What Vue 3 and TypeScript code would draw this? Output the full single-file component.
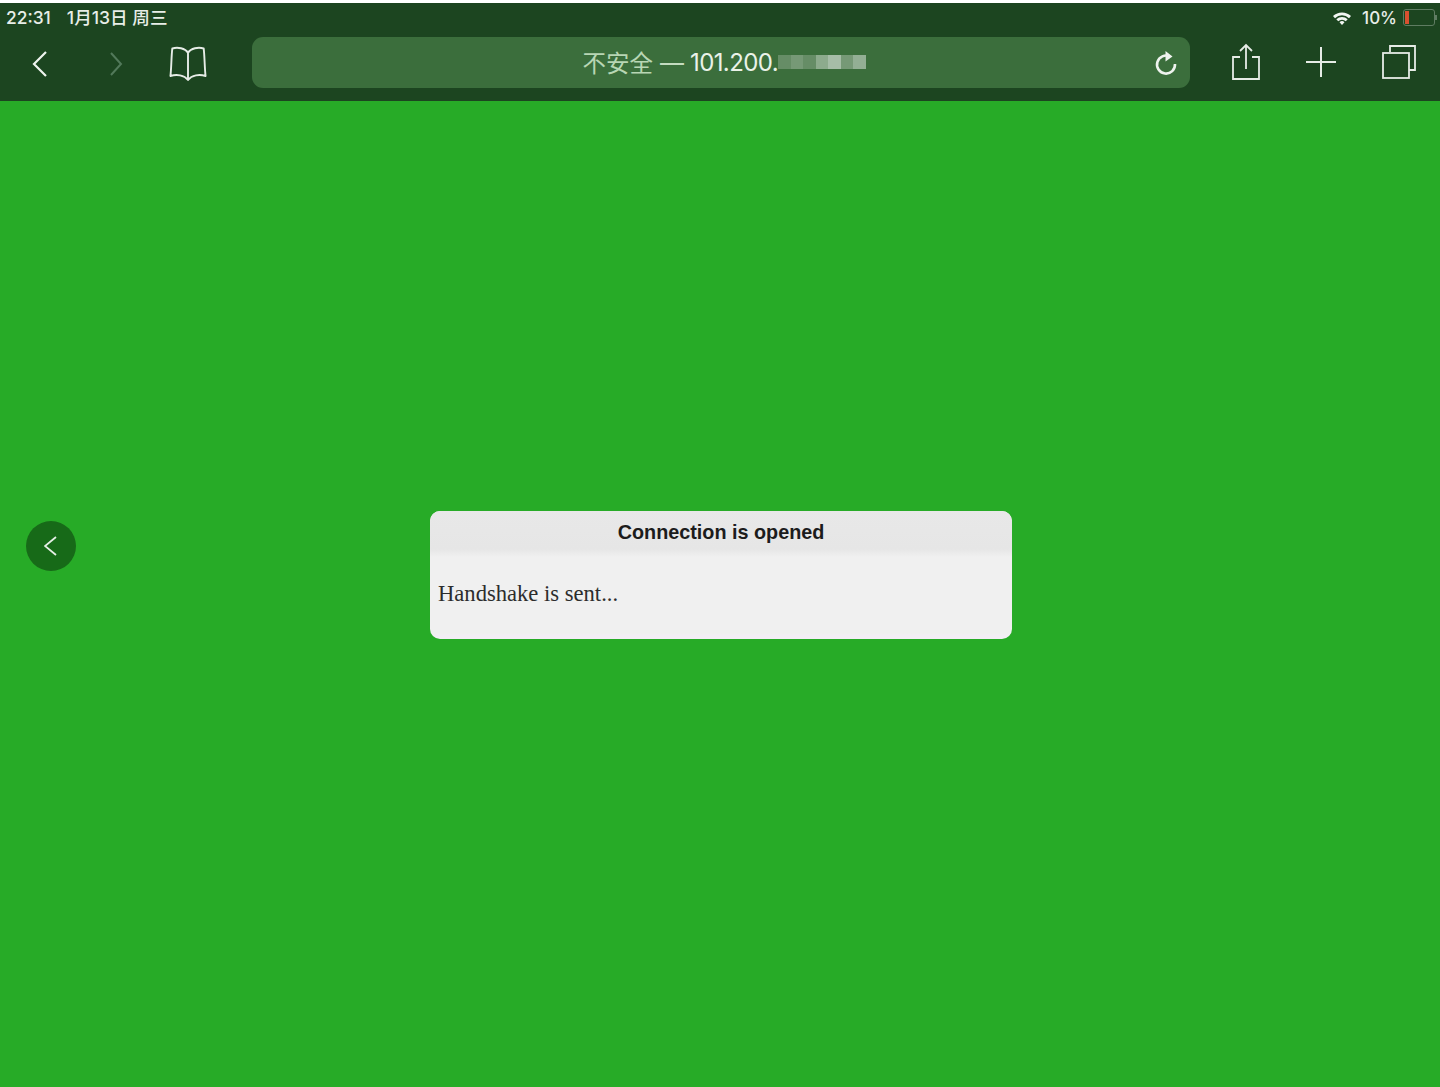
<script setup lang="ts">
const blocks: { w: number; o: number }[] = [
  { w: 12.5, o: 0.22 },
  { w: 12.5, o: 0.3 },
  { w: 12.5, o: 0.22 },
  { w: 12.5, o: 0.42 },
  { w: 12.5, o: 0.55 },
  { w: 12.5, o: 0.3 },
  { w: 12.5, o: 0.45 },
]
</script>

<template>
  <div class="page">
    <header class="chrome">
      <div class="status">
        <div class="status-left">
          <span class="time">22:31</span>
          <span class="date">1月13日 周三</span>
        </div>
        <div class="status-right">
          <svg class="wifi" width="20" height="14" viewBox="0 0 20 14">
            <path d="M1 5 A13 13 0 0 1 19 5 L17 7.2 A10 10 0 0 0 3 7.2 Z" fill="#f2f6f2" />
            <path d="M4.3 8.2 A8.2 8.2 0 0 1 15.7 8.2 L13.8 10.2 A5.5 5.5 0 0 0 6.2 10.2 Z" fill="#f2f6f2" />
            <path d="M7.5 11.2 A3.6 3.6 0 0 1 12.5 11.2 L10 14 Z" fill="#f2f6f2" />
          </svg>
          <span class="pct">10%</span>
          <div class="battery">
            <div class="battery-level"></div>
          </div>
          <div class="battery-tip"></div>
        </div>
      </div>
      <div class="toolbar">
        <div class="nav">
          <svg class="ico-back" width="18" height="28" viewBox="0 0 18 28">
            <path d="M15 2 L3 14 L15 26" fill="none" stroke="#eef3ee" stroke-width="2.2" />
          </svg>
          <svg class="ico-fwd" width="16" height="26" viewBox="0 0 16 26">
            <path d="M3 2 L13 13 L3 24" fill="none" stroke="#52795a" stroke-width="2" />
          </svg>
          <svg class="ico-book" width="38" height="38" viewBox="0 0 40 38" preserveAspectRatio="none">
            <path d="M20 8 C17 3 9 2 3.5 3.5 C2.5 10 2.5 24 1.5 31 C8 29 16 30 20 35 C24 30 32 29 38.5 31 C37.5 24 37.5 10 36.5 3.5 C31 2 23 3 20 8 Z M20 8 V35" fill="none" stroke="#e6ece6" stroke-width="2" stroke-linejoin="round" />
          </svg>
        </div>
        <div class="url">
          <div class="url-text">
            <span class="insecure">不安全</span><span class="dash">—</span><span class="host">101.200.</span>
            <div class="redact">
              <i v-for="(b, i) in blocks" :key="i" :style="{ width: b.w + 'px', opacity: b.o }"></i>
            </div>
          </div>
          <svg class="ico-reload" width="24" height="30" viewBox="0 0 24 30">
            <path d="M16 9.5 A9 9 0 1 0 21 17" fill="none" stroke="#eef3ee" stroke-width="2.6" />
            <path d="M11.5 4 L18.5 9.5 L11.5 14.5 Z" fill="#eef3ee" />
          </svg>
        </div>
        <div class="actions">
          <svg width="30" height="38" viewBox="0 0 30 38">
            <path d="M9 14 H2 V36 H28 V14 H21" fill="none" stroke="#e6ece6" stroke-width="1.8" />
            <path d="M15 26 V2 M9 8 L15 2 L21 8" fill="none" stroke="#e6ece6" stroke-width="1.8" />
          </svg>
          <svg width="32" height="32" viewBox="0 0 32 32">
            <path d="M16 1 V31 M1 16 H31" fill="none" stroke="#e6ece6" stroke-width="2" />
          </svg>
          <svg width="36" height="36" viewBox="0 0 36 36">
            <path d="M9 8 V2 H34 V26 H28" fill="none" stroke="#e6ece6" stroke-width="1.8" />
            <rect x="2" y="9" width="26" height="25" fill="none" stroke="#e6ece6" stroke-width="1.8" />
          </svg>
        </div>
      </div>
    </header>
    <main class="stage">
      <button class="side-btn" type="button" aria-label="Back">
        <svg width="14" height="22" viewBox="0 0 14 22">
          <path d="M12 2 L1 11 L12 20" fill="none" stroke="#e6efe6" stroke-width="1.8" />
        </svg>
      </button>
      <section class="dialog">
        <h1 class="dialog-title">Connection is opened</h1>
        <p class="dialog-body">Handshake is sent...</p>
      </section>
    </main>
  </div>
</template>

<style scoped>
.page {
  width: 1440px;
  height: 1087px;
  padding-top: 3px;
  box-sizing: border-box;
  background: #ffffff;
  display: flex;
  flex-direction: column;
  overflow: hidden;
}
.chrome {
  height: 98px;
  flex: none;
  background: #1c4520;
  color: #eef3ee;
  font-family: Inter, "Noto Sans CJK SC", sans-serif;
}
.status {
  height: 29px;
  display: flex;
  justify-content: space-between;
  align-items: center;
  padding: 0 3px 0 6px;
}
.status-left {
  display: flex;
  align-items: center;
  gap: 16px;
  line-height: 20px;
  color: #e8eee8;
}
.date {
  font-size: 17.6px;
  font-weight: 500;
}
.time {
  font-size: 17.4px;
  font-weight: 500;
}
.status-right {
  display: flex;
  align-items: center;
}
.wifi {
  margin-right: 10px;
}
.pct {
  font-size: 17px;
  font-weight: 500;
  margin-right: 6px;
  color: #e8eee8;
}
.battery {
  width: 28px;
  height: 13px;
  border: 1px solid #5f7c62;
  border-radius: 3px;
  padding: 1px;
  box-sizing: content-box;
  display: flex;
}
.battery-level {
  width: 4px;
  background: #d8502f;
}
.battery-tip {
  width: 2px;
  height: 5px;
  background: #5f7c62;
}
.toolbar {
  height: 69px;
  padding: 5px 0 14px;
  box-sizing: border-box;
  display: flex;
  align-items: center;
}
.nav {
  width: 252px;
  flex: none;
  display: flex;
  align-items: center;
  padding-left: 31px;
  padding-top: 4px;
  box-sizing: border-box;
}
.ico-fwd {
  margin-left: 59px;
}
.ico-book {
  margin-left: 45px;
}
.url {
  width: 938px;
  height: 51px;
  flex: none;
  border-radius: 11px;
  background: #3b6e3c;
  display: flex;
  align-items: center;
  justify-content: center;
  position: relative;
}
.url-text {
  display: flex;
  align-items: center;
  margin-left: 6px;
  white-space: pre;
}
.insecure {
  color: #b8d6b4;
  font-family: "Noto Sans CJK SC", sans-serif;
  font-weight: 400;
  font-size: 23.5px;
}
.dash {
  color: #c4dcc0;
  font-size: 24px;
  margin: 0 6px 0 7px;
}
.host {
  color: #eaf2e8;
  font-size: 24px;
  letter-spacing: -0.6px;
}
.redact {
  display: flex;
  height: 14px;
}
.redact i {
  display: block;
  height: 14px;
  background: #ffffff;
}
.ico-reload {
  position: absolute;
  right: 12px;
  top: 10px;
}
.actions {
  flex: 1;
  display: flex;
  align-items: center;
  padding-left: 41px;
  gap: 44px;
}
.stage {
  flex: 1;
  background: #27ab27;
  display: flex;
  justify-content: center;
  align-items: flex-start;
  padding: 410px 0 0 2px;
  position: relative;
}
.side-btn {
  position: absolute;
  left: 26px;
  top: 420px;
  width: 50px;
  height: 50px;
  padding: 0;
  border: none;
  border-radius: 50%;
  background: #176a18;
  display: flex;
  align-items: center;
  justify-content: center;
}
.dialog {
  width: 582px;
  height: 128px;
  border-radius: 10px;
  background: linear-gradient(#f0f0f0 0 122px, #f4eef6 125px);
  overflow: hidden;
  color: #222;
}
.dialog-title {
  margin: 0;
  height: 46px;
  background: linear-gradient(#e8e8e8 0, #e6e6e6 38px, #f0f0f0 46px);
  font-family: "Liberation Sans", Arial, sans-serif;
  font-size: 19.8px;
  font-weight: 700;
  line-height: 43px;
  text-align: center;
  color: #1c1c1c;
}
.dialog-body {
  margin: 0;
  padding: 24px 0 0 8px;
  font-family: "Liberation Serif", "Times New Roman", serif;
  font-size: 22.6px;
  line-height: 26px;
  color: #2c2c2c;
}
</style>
